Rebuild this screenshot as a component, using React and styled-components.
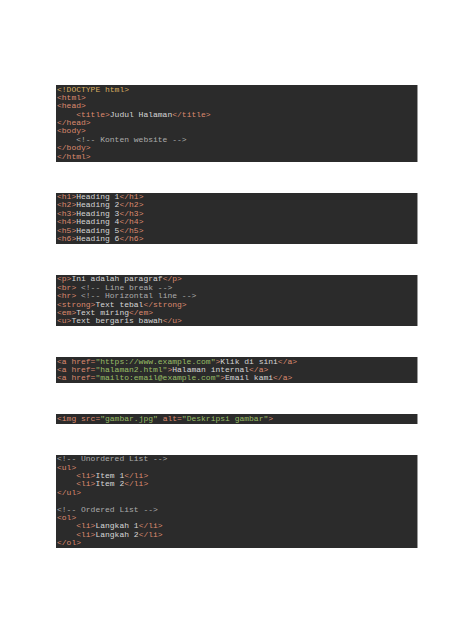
import React from "react";
import styled, { createGlobalStyle } from "styled-components";

const blocks = [
  [
    "<!DOCTYPE html>",
    "<html>",
    "<head>",
    "    <title>Judul Halaman</title>",
    "</head>",
    "<body>",
    "    <!-- Konten website -->",
    "</body>",
    "</html>",
  ],
  [
    "<h1>Heading 1</h1>",
    "<h2>Heading 2</h2>",
    "<h3>Heading 3</h3>",
    "<h4>Heading 4</h4>",
    "<h5>Heading 5</h5>",
    "<h6>Heading 6</h6>",
  ],
  [
    "<p>Ini adalah paragraf</p>",
    "<br> <!-- Line break -->",
    "<hr> <!-- Horizontal line -->",
    "<strong>Text tebal</strong>",
    "<em>Text miring</em>",
    "<u>Text bergaris bawah</u>",
  ],
  [
    '<a href="https://www.example.com">Klik di sini</a>',
    '<a href="halaman2.html">Halaman internal</a>',
    '<a href="mailto:email@example.com">Email kami</a>',
  ],
  ['<img src="gambar.jpg" alt="Deskripsi gambar">'],
  [
    "<!-- Unordered List -->",
    "<ul>",
    "    <li>Item 1</li>",
    "    <li>Item 2</li>",
    "</ul>",
    "",
    "<!-- Ordered List -->",
    "<ol>",
    "    <li>Langkah 1</li>",
    "    <li>Langkah 2</li>",
    "</ol>",
  ],
];

// very small html tokenizer, good enough for these snippets
const tokenize = line => {
  const out = [];
  let i = 0;
  while (i < line.length) {
    if (line.startsWith("<!--", i)) {
      const end = line.indexOf("-->", i) + 3;
      out.push(["comment", line.slice(i, end)]);
      i = end;
    } else if (line.startsWith("<!", i)) {
      const end = line.indexOf(">", i) + 1;
      out.push(["doctype", line.slice(i, end)]);
      i = end;
    } else if (line[i] === "<") {
      const end = line.indexOf(">", i) + 1;
      const tag = line.slice(i, end);
      tag.split(/("[^"]*")/).forEach(part => {
        if (part) out.push([part.startsWith('"') ? "value" : "tag", part]);
      });
      i = end;
    } else {
      let end = line.indexOf("<", i);
      if (end === -1) end = line.length;
      out.push(["text", line.slice(i, end)]);
      i = end;
    }
  }
  return out;
};

const App = () => {
  return (
    <Page>
      <GlobalStyle />
      {blocks.map((lines, b) => (
        <CodeBlock key={b}>
          {lines.map((line, l) => (
            <Line key={l}>
              {line === ""
                ? " "
                : tokenize(line).map(([kind, text], t) => (
                    <Token key={t} $kind={kind}>
                      {text}
                    </Token>
                  ))}
            </Line>
          ))}
        </CodeBlock>
      ))}
    </Page>
  );
};

const GlobalStyle = createGlobalStyle`
body {
  margin: 0;
  background: #ffffff;
}
`;

const Page = styled.div`
width: 474px;
height: 632px;
box-sizing: border-box;
padding: 85px 0 0 56px;
display: flex;
flex-direction: column;
gap: 31px;
`;

const CodeBlock = styled.pre`
margin: 0;
width: 362px;
box-sizing: border-box;
padding: 0.5px 1px;
background-color: #2b2b2b;
border-right: 1px solid #9a9a9a;
font-family: "Liberation Mono", "DejaVu Sans Mono", monospace;
font-size: 8px;
line-height: 8.4px;
color: #d8d8d8;
`;

const Line = styled.div`
white-space: pre;
height: 8.4px;
`;

const colors = {
  tag: "#dc8a6e",
  doctype: "#d9ad60",
  value: "#98bd66",
  comment: "#acacac",
  text: "#d6d6d6",
};

const Token = styled.span`
color: ${p => colors[p.$kind]};
`;

export default App;
